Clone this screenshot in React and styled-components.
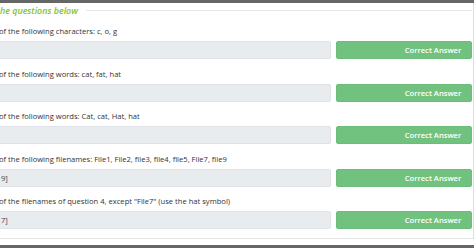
import React from 'react'
import styled, { createGlobalStyle } from 'styled-components'

const GlobalStyle = createGlobalStyle`
    html, body {
        margin: 0;
        padding: 0;
        background: #ffffff;
        overflow: hidden;
    }
    body {
        font-family: "Open Sans", "Noto Sans", sans-serif;
        color: #333;
    }
`

const Page = styled.div`
    width: 474px;
    height: 248px;
    display: flex;
    flex-direction: column;
    overflow: hidden;
`
const Bar = styled.div`
    height: ${p => p.$h}px;
    background: #666;
    flex-shrink: 0;
`
const Card = styled.div`
    height: 236px;
    box-sizing: border-box;
    padding: 1px 1px 0 0;
    background: #fff;
    border-right: 1px solid #dedede;
    border-bottom: 1px solid #e6e6e6;
    display: flex;
    flex-direction: column;
`
const Spacer = styled.div`
    flex: 1;
`
const Title = styled.div`
    display: flex;
    align-items: center;
    height: 13px;
    margin-bottom: 8px;
    font-size: 8.9px;
    font-style: italic;
    font-weight: 600;
    color: #84c12a;
    white-space: nowrap;

    &::after {
        content: '';
        flex: 1;
        height: 1px;
        margin-left: 8px;
        background: #e8e8e8;
    }
`
const Question = styled.div`
    display: flex;
    flex-direction: column;
    gap: 4px;
    margin-bottom: 8.5px;
`
const Label = styled.div`
    height: 12px;
    line-height: 12px;
    font-size: 7.6px;
    color: #333;
    white-space: nowrap;
    margin-left: -1px;
`
const Row = styled.div`
    display: grid;
    grid-template-columns: 334px 1fr;
    gap: 5px;
    margin-left: -3px;
`
const Input = styled.div`
    height: 18px;
    box-sizing: border-box;
    padding-left: 3px;
    background: #e9ecef;
    border: 1px solid #dfe2e6;
    border-radius: 2px;
    font-size: 7.6px;
    line-height: 16px;
    color: #444;
    white-space: nowrap;
    overflow: hidden;
`
const Button = styled.button`
    height: 18px;
    padding: 0 0 0 58px;
    border: 1px solid #6bbd79;
    border-radius: 2px;
    background: #71c27f;
    color: #fff;
    font-family: "Open Sans", "Noto Sans", sans-serif;
    font-size: 7.6px;
    font-weight: 600;
    text-align: center;
    cursor: pointer;
`

const questions = [
    { label: 'of the following characters: c, o, g', value: '' },
    { label: 'of the following words: cat, fat, hat', value: '' },
    { label: 'of the following words: Cat, cat, Hat, hat', value: '' },
    { label: 'of the following filenames: File1, File2, file3, file4, file5, File7, file9', value: '9]' },
    { label: 'of the filenames of question 4, except "File7" (use the hat symbol)', value: '7]' },
]

const App = () => {
  return (
    <Page>
        <GlobalStyle />
        <Bar $h={3} />
        <Card>
            <Title>he questions below</Title>
            {questions.map((q, i) => (
                <Question key={i}>
                    <Label>{q.label}</Label>
                    <Row>
                        <Input>{q.value}</Input>
                        <Button>Correct Answer</Button>
                    </Row>
                </Question>
            ))}
            <Spacer />
        </Card>
        <Spacer />
        <Bar $h={3} />
    </Page>
  )
}

export default App
